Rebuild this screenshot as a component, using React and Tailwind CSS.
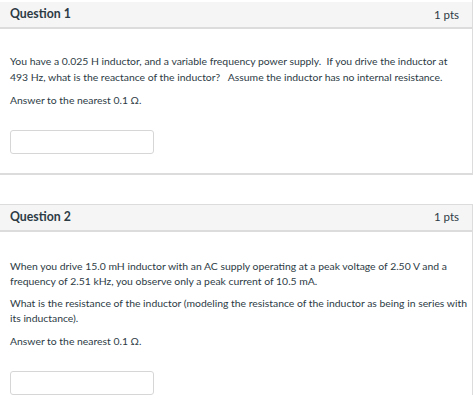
import React from "react";

function Header({ title }) {
  return (
    <div className="flex h-[27px] items-center justify-between bg-[#f5f5f5] border-b-2 border-[#dcdcdc] pl-[10px] pr-[13px]">
      <span className="text-[12.3px] font-bold text-[#2d3b45]">{title}</span>
      <span className="text-[11.5px] font-normal text-[#2d3b45]">1 pts</span>
    </div>
  );
}

function Input() {
  return <div className="h-[24px] w-[144px] rounded-[3px] border border-[#d6d6d6] bg-white" />;
}

export default function App() {
  return (
    <div
      className="w-[474px] h-[410px] overflow-hidden bg-white text-[#2d3b45]"
      style={{ fontFamily: "Lato, 'Open Sans', sans-serif" }}
    >
      <div className="pt-[2px] border-r border-b-2 border-[#dcdcdc] w-[473px]">
        <Header title="Question 1" />
        <div className="pl-[10px] pr-[6px] pt-[25px] pb-[19px] text-[10.4px] leading-[15.5px]">
          <p>
            You have a 0.025 H inductor, and a variable frequency power supply.&nbsp; If you drive the inductor at 493 Hz, what is the reactance of the inductor?&nbsp;&nbsp; Assume the inductor has no internal resistance.
          </p>
          <p className="mt-[8px]">Answer to the nearest 0.1 Ω.</p>
          <div className="mt-[21px]">
            <Input />
          </div>
        </div>
      </div>
      <div className="mt-[29px] border-t border-r border-[#dcdcdc] w-[473px]">
        <Header title="Question 2" />
        <div className="pl-[10px] pr-[4px] pt-[27px] text-[10.4px] leading-[15.5px]">
          <p>
            When you drive 15.0 mH inductor with an AC supply operating at a peak voltage of 2.50 V and a frequency of 2.51 kHz, you observe only a peak current of 10.5 mA.
          </p>
          <p className="mt-[6px]">
            What is the resistance of the inductor (modeling the resistance of the inductor as being in series with its inductance).
          </p>
          <p className="mt-[7px]">Answer to the nearest 0.1 Ω.</p>
          <div className="mt-[22px]">
            <Input />
          </div>
        </div>
      </div>
    </div>
  );
}
